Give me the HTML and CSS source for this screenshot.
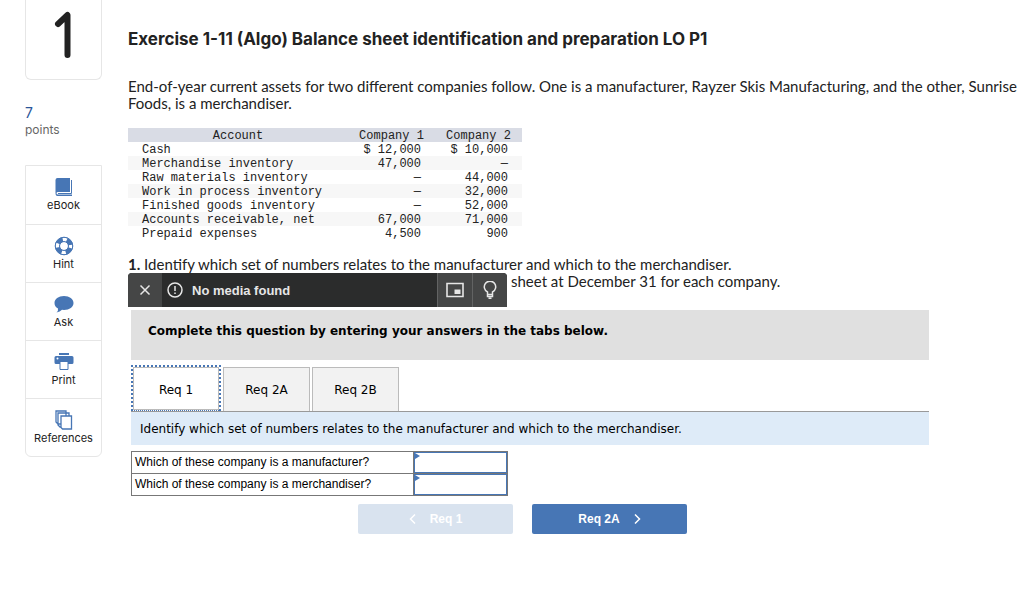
FILE: index.html
```html
<!DOCTYPE html>
<html lang="en">
<head>
  <meta charset="UTF-8">
  <meta name="viewport" content="width=device-width, initial-scale=1.0">
  <title>Exercise 1-11 (Algo)</title>
  <link rel="stylesheet" href="styles.css">
</head>
<body>
  <div class="page">
    <aside class="sidebar">
      <div class="number">
        <svg width="20" height="48" viewBox="0 0 20 48" fill="none" stroke="#222" stroke-width="6" stroke-linecap="round" stroke-linejoin="round" role="img" aria-label="1"><path d="M4 13 13.500 4v40"/></svg>
      </div>
      <div class="points"><span class="points-value">7</span>points</div>
      <nav class="tools">
        <a href="#" class="tool">
          <svg width="20" height="20" viewBox="0 0 20 20"><path fill="#4776b5" d="M3.500 1H16v14H4q-1.500 0-1.500 1.200T4 17.500h14V19H3.500Q1.500 19 1.500 16V3q0-2 2-2z"/><path d="M4 16.500h13.500V3" stroke="#4776b5" fill="none"/></svg>
          eBook
        </a>
        <a href="#" class="tool">
          <svg width="20" height="20" viewBox="0 0 20 20" fill="none"><circle cx="10" cy="10" r="6.500" stroke="#4776b5" stroke-width="5"/><circle cx="10" cy="10" r="6.300" stroke="#fff" stroke-width="4" stroke-dasharray="4 5.900" stroke-dashoffset="2"/><circle cx="10" cy="10" r="8.800" stroke="#4776b5"/><circle cx="10" cy="10" r="4.500" stroke="#4776b5"/></svg>
          Hint
        </a>
        <a href="#" class="tool">
          <svg width="20" height="20" viewBox="0 0 20 20"><path fill="#4776b5" d="M10 2c5.500 0 9.500 3 9.500 7s-4 7-9.500 7l-2-.2Q6 18 2.500 18.500q2-2 1.500-4Q.5 12.500.5 9c0-4 4-7 9.500-7z"/></svg>
          Ask
        </a>
        <a href="#" class="tool">
          <svg width="20" height="20" viewBox="0 0 20 20"><path fill="#4776b5" d="M5 1h10v2H5zM2 4h16q1.500 0 1.500 1.500v5q0 1.500-1.500 1.500H2Q.5 12 .5 10.500v-5Q.5 4 2 4z"/><path fill="#fff" stroke="#4776b5" d="M6 9.500h8v8H6z"/><circle cx="3.500" cy="6.500" r="1" fill="#fff"/></svg>
          Print
        </a>
        <a href="#" class="tool">
          <svg width="20" height="20" viewBox="0 0 20 20" fill="#fff" stroke="#4776b5" stroke-width="1.300"><path d="M2 1h10v13H4l-2-2zM4 3h11v14H6l-2-2z"/><path d="M7 6h10.500v13H8.500L7 17.500z"/></svg>
          References
        </a>
      </nav>
    </aside>

    <main class="content">
      <h1>Exercise 1-11 (Algo) Balance sheet identification and preparation LO P1</h1>
      <p class="intro">End-of-year current assets for two different companies follow. One is a manufacturer, Rayzer Skis Manufacturing, and the other, Sunrise Foods, is a merchandiser.</p>

      <table class="accounts">
        <thead>
          <tr><th class="account">Account</th><th>Company 1</th><th>Company 2</th></tr>
        </thead>
        <tbody>
          <tr><td>Cash</td><td>$ 12,000</td><td>$ 10,000</td></tr>
          <tr><td>Merchandise inventory</td><td>47,000</td><td>—</td></tr>
          <tr><td>Raw materials inventory</td><td>—</td><td>44,000</td></tr>
          <tr><td>Work in process inventory</td><td>—</td><td>32,000</td></tr>
          <tr><td>Finished goods inventory</td><td>—</td><td>52,000</td></tr>
          <tr><td>Accounts receivable, net</td><td>67,000</td><td>71,000</td></tr>
          <tr><td>Prepaid expenses</td><td>4,500</td><td>900</td></tr>
        </tbody>
      </table>

      <p class="task"><b>1.</b> Identify which set of numbers relates to the manufacturer and which to the merchandiser.</p>
      <div class="media-row">
        <div class="media-bar">
          <button class="media-btn" aria-label="Close">
            <svg width="12" height="12" viewBox="0 0 12 12" stroke="#e6e6e6" stroke-width="1.500"><path d="M1.500 1.500l9 9M10.500 1.500l-9 9"/></svg>
          </button>
          <div class="media-text">
            <svg width="16" height="16" viewBox="0 0 16 16" fill="none" stroke="#e6e6e6" stroke-width="1.500"><circle cx="8" cy="8" r="7"/><path d="M8 4v5M8 10.500V12"/></svg>
            No media found
          </div>
          <button class="media-btn split" aria-label="Picture in picture">
            <svg width="18" height="16" viewBox="0 0 18 16"><path d="M1 1.500h16v13H1z" fill="none" stroke="#e6e6e6" stroke-width="1.600"/><path d="M8.500 7.500h6v4.500h-6z" fill="#e6e6e6"/></svg>
          </button>
          <button class="media-btn split" aria-label="Tips">
            <svg width="14" height="18" viewBox="0 0 14 18" fill="none" stroke="#e6e6e6" stroke-width="1.500"><path d="M4.500 13.500V11a5.700 5.700 0 1 1 5 0v2.500zM4.500 13.500v2h5v-2M5.500 17.200h3"/></svg>
          </button>
        </div>
        <span>sheet at December 31 for each company.</span>
      </div>

      <section class="question">
        <div class="banner">Complete this question by entering your answers in the tabs below.</div>
        <div class="tabs" role="tablist">
          <button class="tab active" role="tab" aria-selected="true">Req 1</button>
          <button class="tab" role="tab">Req 2A</button>
          <button class="tab" role="tab">Req 2B</button>
        </div>
        <div class="prompt">Identify which set of numbers relates to the manufacturer and which to the merchandiser.</div>
        <table class="answers">
          <tr>
            <td><label for="manufacturer">Which of these company is a manufacturer?</label></td>
            <td class="entry"><input type="text" id="manufacturer"></td>
          </tr>
          <tr>
            <td><label for="merchandiser">Which of these company is a merchandiser?</label></td>
            <td class="entry"><input type="text" id="merchandiser"></td>
          </tr>
        </table>
        <div class="pager">
          <button class="prev" disabled>
            <svg width="7" height="10" viewBox="0 0 7 10" fill="none" stroke="currentColor" stroke-width="1.500"><path d="M6 .5 1.500 5 6 9.500"/></svg>
            Req 1
          </button>
          <button class="next">
            Req 2A
            <svg width="7" height="10" viewBox="0 0 7 10" fill="none" stroke="currentColor" stroke-width="1.500"><path d="M1 .5 5.500 5 1 9.500"/></svg>
          </button>
        </div>
      </section>
    </main>
  </div>
</body>
</html>
```
FILE: styles.css
```css
* {
  box-sizing: border-box;
}
body {
  margin: 0;
  background: #fff;
  color: #222;
  font-family: Lato, "Open Sans", sans-serif;
  font-size: 15px;
  line-height: 17px;
}
button {
  border: none;
  padding: 0;
  cursor: pointer;
}
.page {
  display: flex;
  gap: 26px;
  padding-left: 25px;
}
.sidebar {
  flex: 0 0 77px;
}
.number {
  display: flex;
  justify-content: center;
  height: 80px;
  padding-top: 11px;
  border: 1px solid #e6e6e6;
  border-top: none;
  border-radius: 0 0 6px 6px;
}
.points {
  margin-top: 24px;
  font-family: Inter, sans-serif;
  font-size: 12px;
  color: #666;
}
.points-value {
  display: block;
  font-size: 14px;
  color: #2a5599;
}
.tools {
  margin-top: 27px;
  border: 1px solid #e6e6e6;
  border-radius: 0 0 6px 6px;
}
.tool {
  display: flex;
  flex-direction: column;
  align-items: center;
  height: 58px;
  padding-top: 11px;
  font-family: Inter, sans-serif;
  font-size: 11px;
  line-height: 16px;
  color: #222;
  text-decoration: none;
}
.tool + .tool {
  border-top: 1px solid #e6e6e6;
}
.content {
  flex: 1;
  min-width: 0;
  padding-top: 28px;
}
h1 {
  margin: 0;
  font-family: Inter, sans-serif;
  font-size: 17px;
  line-height: 22px;
}
.intro {
  margin: 28px 0 0;
}
.accounts {
  width: 394px;
  margin-top: 16px;
  border-collapse: collapse;
  table-layout: fixed;
  font-family: "Liberation Mono", monospace;
  font-size: 12px;
  line-height: 12px;
}
.accounts th {
  padding: 2px 0 0;
  background: #d9dce5;
  font-weight: normal;
}
.accounts .account {
  width: 220px;
}
.accounts td {
  padding: 2px 14px 0 0;
  text-align: right;
}
.accounts td:first-child {
  padding: 2px 0 0 14px;
  text-align: left;
}
.accounts tbody tr:nth-child(even) {
  background: #f7f7f7;
}
.task {
  margin: 16px 0 0;
}
.media-row {
  display: flex;
  gap: 4px;
}
.media-bar {
  display: flex;
  flex: 0 0 379px;
  height: 34px;
  background: #2b2c2c;
  border-radius: 4px 4px 0 0;
  overflow: hidden;
}
.media-btn {
  display: flex;
  align-items: center;
  justify-content: center;
  width: 34px;
  background: #454646;
}
.media-btn.split {
  width: 35px;
  border-left: 1px solid #626363;
}
.media-text {
  display: flex;
  flex: 1;
  align-items: center;
  gap: 9px;
  padding-left: 5px;
  color: #e6e6e6;
  font-family: "Liberation Sans", sans-serif;
  font-size: 13px;
  font-weight: bold;
}
.question {
  max-width: 801px;
  padding: 3px 0 0 3px;
  color: #000;
  font-family: "DejaVu Sans", sans-serif;
  font-size: 12px;
}
.banner {
  height: 50px;
  padding: 13px 17px;
  background: #e0e0e0;
  font-weight: bold;
}
.tabs {
  display: flex;
  align-items: flex-end;
  gap: 2px;
  margin-top: 5px;
  border-bottom: 1px solid #999;
}
.tab {
  width: 87px;
  height: 44px;
  padding-top: 2px;
  background: #f2f2f2;
  border: 1px solid #bbb;
  border-bottom: none;
  color: #000;
  font: inherit;
}
.tab.active {
  width: 90px;
  height: 46px;
  padding-top: 4px;
  background: #fff;
  border: 2px dotted #4776b5;
  border-bottom-width: 1px;
  box-shadow: inset 0 0 0 1px #bbb;
}
.prompt {
  padding: 9px 9px 7px;
  background: #deebf8;
}
.answers {
  width: 377px;
  margin-top: 6px;
  border-collapse: collapse;
  font-family: "Liberation Sans", sans-serif;
}
.answers td {
  height: 22px;
  padding: 0 3px;
  border: 1px solid #777;
}
.answers .entry {
  position: relative;
  width: 94px;
  padding: 0;
}
.entry input {
  display: block;
  width: 100%;
  height: 21px;
  padding: 0 6px;
  border: 1px solid #4776b5;
  outline: none;
}
.entry::before {
  content: "";
  position: absolute;
  top: 1px;
  left: 1px;
  border: 3px solid transparent;
  border-left: 5px solid #4776b5;
}
.pager {
  display: flex;
  gap: 19px;
  margin: 8px 0 0 227px;
}
.pager button {
  display: flex;
  align-items: center;
  justify-content: center;
  gap: 14px;
  width: 155px;
  height: 30px;
  border-radius: 2px;
  background: #4776b5;
  color: #fff;
  font-family: "Liberation Sans", sans-serif;
  font-size: 12px;
  font-weight: bold;
}
.pager .prev {
  background: #d9e3ef;
}
```
